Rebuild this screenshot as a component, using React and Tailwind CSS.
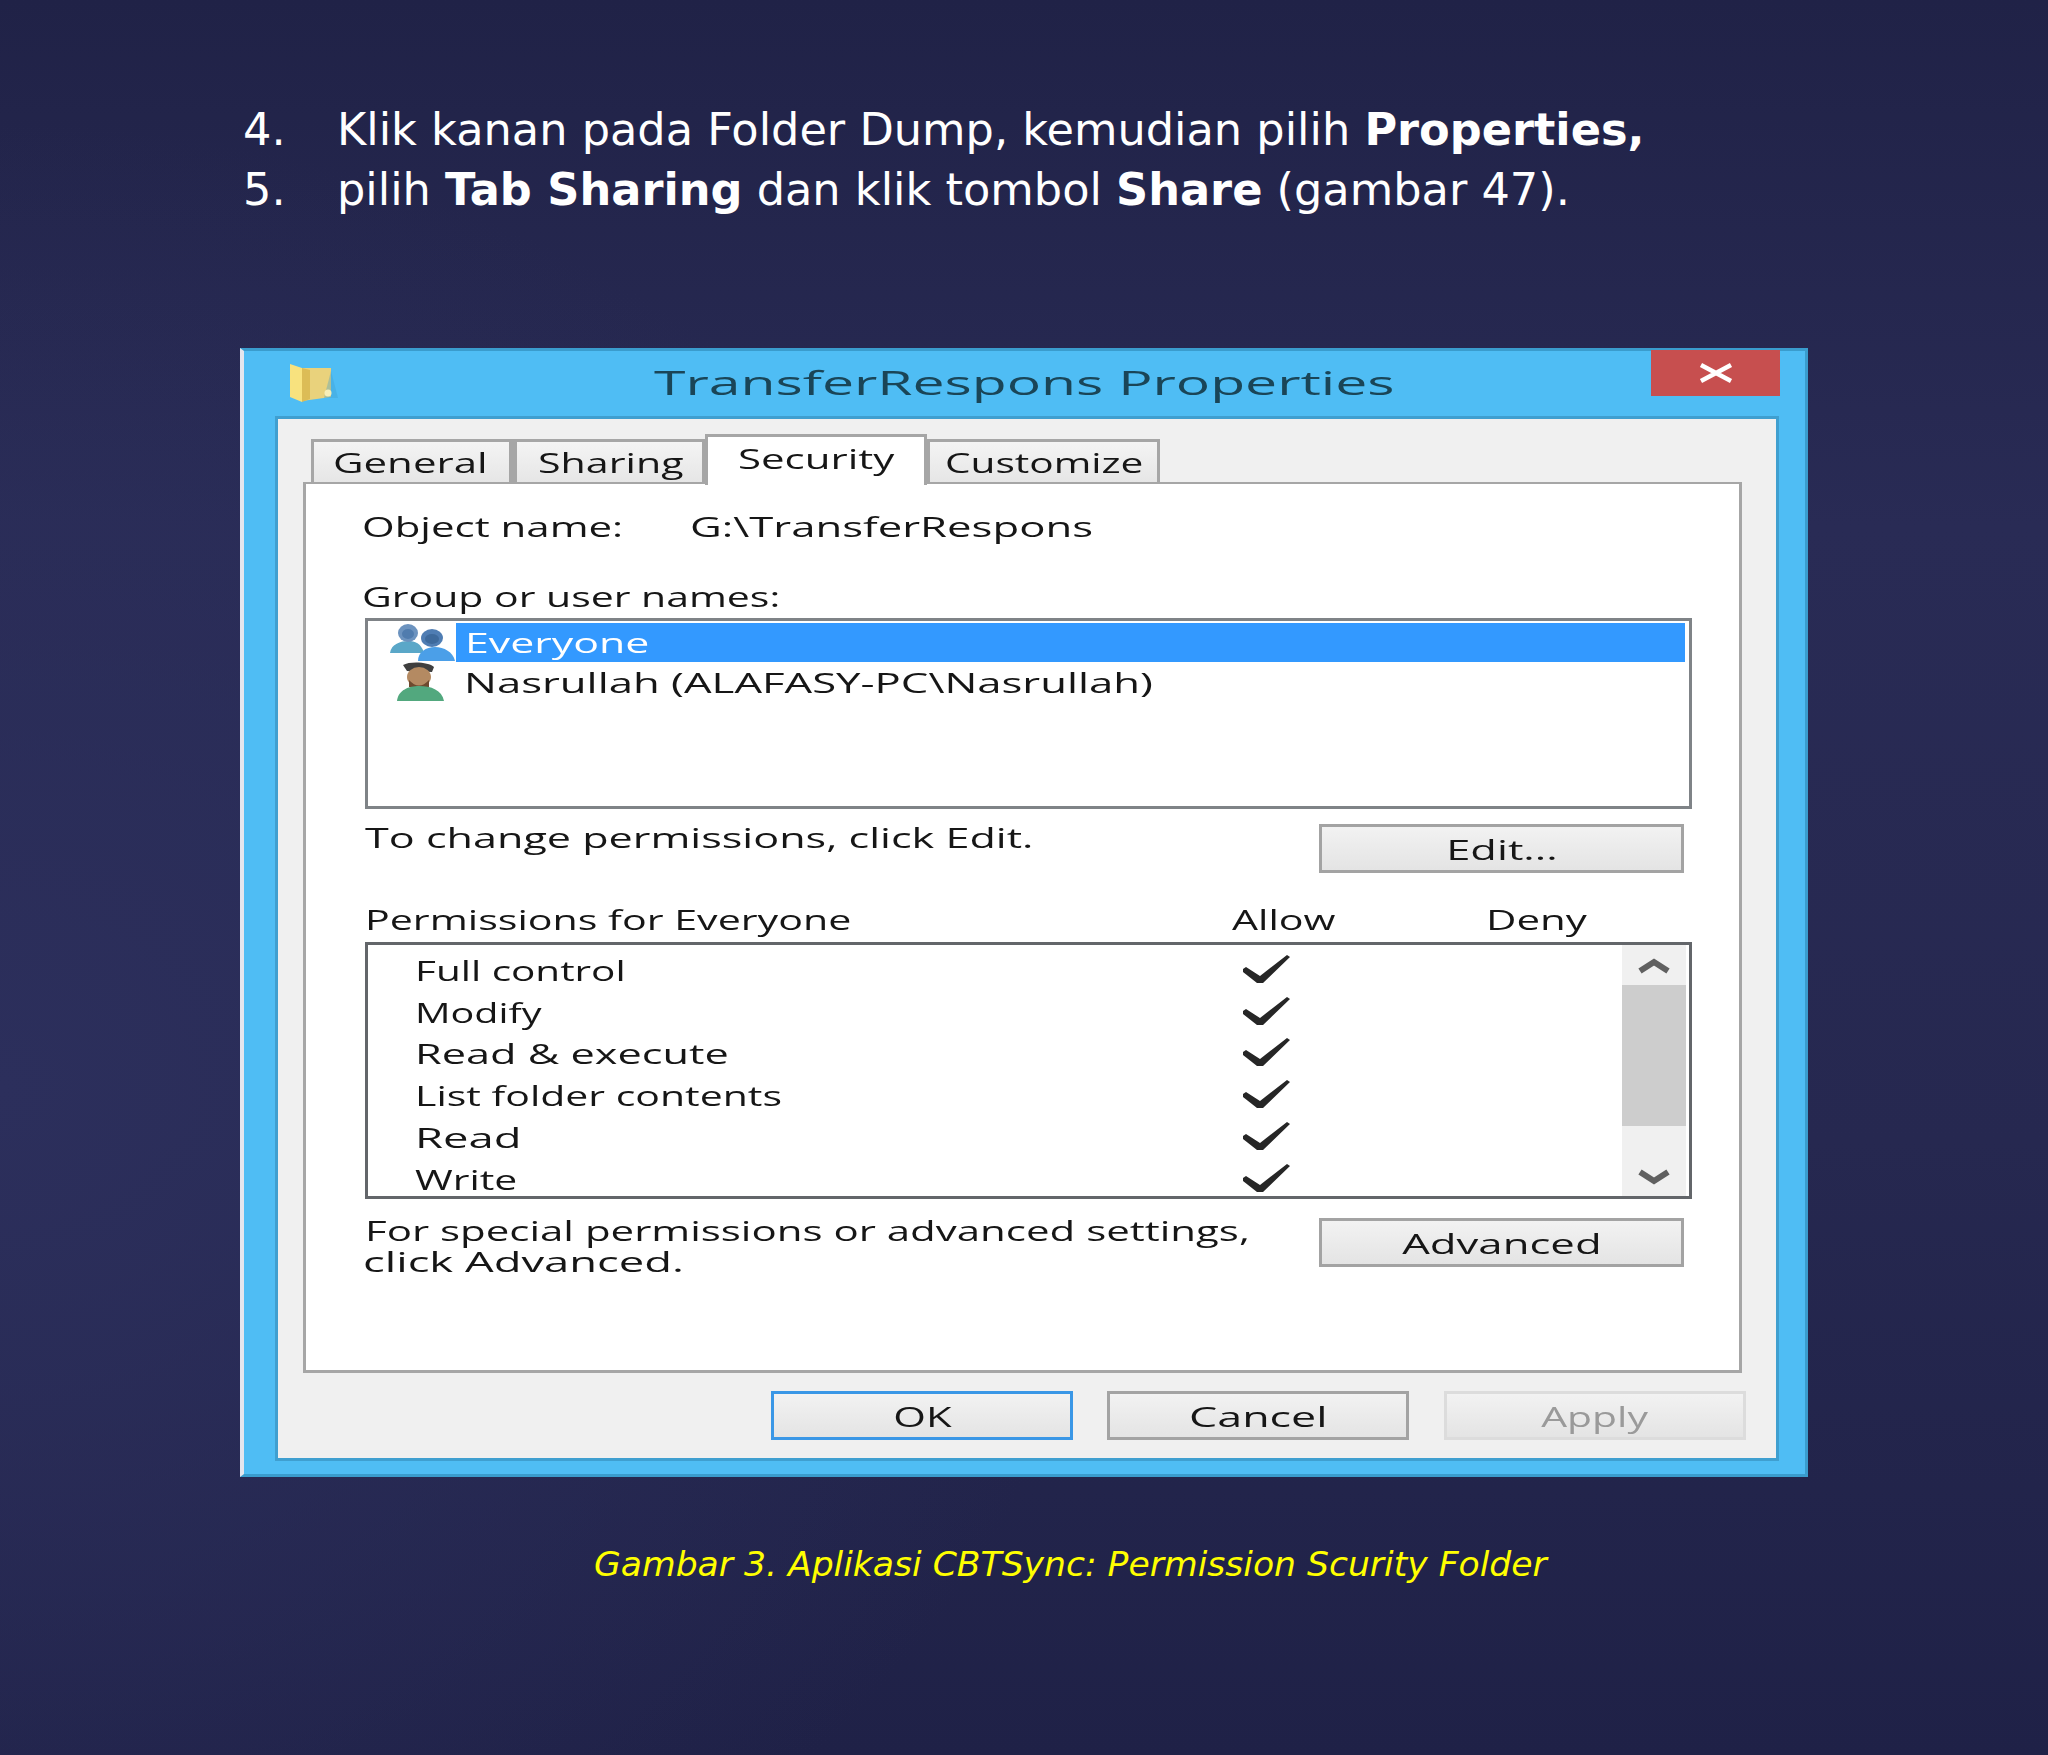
const FONT = "font-['Open_Sans','Liberation_Sans',sans-serif]";

function Stretch({ children, sx = "scale-x-[1.5]" }) {
  return <span className={`inline-block whitespace-nowrap origin-left ${sx}`}>{children}</span>;
}

function Folder() {
  return (
    <svg width="52" height="42" viewBox="0 0 52 42">
      <path d="M14 6 L43 6 L43 35 L14 39 Z" fill="#e9d27c" />
      <path d="M43 9 L50 36 L36 36 Z" fill="#3d9fcf" opacity="0.35" />
      <path d="M2 2 L14 6 L14 40 L2 35 Z" fill="#f8e27e" />
      <path d="M14 6 L22 8 L22 37 L14 40 Z" fill="#dcbc56" />
      <circle cx="40" cy="31" r="3.5" fill="#f7eeb8" />
    </svg>
  );
}

function GroupIcon() {
  return (
    <svg width="68" height="40" viewBox="0 0 68 40">
      <path d="M2 30 C3 21 13 18 20 18 C27 18 33 20 36 30 Z" fill="#5aa7c8" />
      <ellipse cx="20" cy="10" rx="10" ry="9" fill="#6c93bf" />
      <ellipse cx="20" cy="11" rx="6" ry="5" fill="#507cae" />
      <path d="M30 38 C30 29 38 24 47 24 C56 24 65 29 67 38 Z" fill="#4b9fe8" />
      <ellipse cx="44" cy="15" rx="11" ry="9" fill="#4f7db3" />
      <ellipse cx="44" cy="16" rx="7" ry="5" fill="#3e6a9c" />
    </svg>
  );
}

function UserIcon() {
  return (
    <svg width="52" height="40" viewBox="0 0 52 40">
      <path d="M7 3 C14 -1 33 0 38 5 L36 10 L11 9 Z" fill="#3f3f3f" />
      <ellipse cx="23" cy="15" rx="12" ry="10" fill="#b48a62" />
      <path d="M13 18 Q23 29 33 18 L33 25 L13 25 Z" fill="#6e4a2e" />
      <path d="M1 39 C2 28 13 24 23 24 C35 24 46 28 48 39 Z" fill="#52a87e" />
    </svg>
  );
}

function Check() {
  return (
    <svg width="50" height="30" viewBox="0 0 50 30" className="shrink-0">
      <path d="M0 14 L3 12 L17 21 L44 0 L47 2 L20 28 L14 28 L0 17 Z" fill="#262626" />
    </svg>
  );
}

function Chevron({ up }) {
  return (
    <svg width="32" height="18" viewBox="0 0 32 18">
      <path d={up ? "M2 15 L16 6 L30 15" : "M2 3 L16 12 L30 3"} fill="none" stroke="#606060" strokeWidth="6" />
    </svg>
  );
}

function Tab({ label, w, pad, sx, active, border = "" }) {
  if (active) {
    return (
      <div className={`${w} ${pad} h-[51px] -mb-[3px] bg-white border-[3px] border-b-0 border-[#a6a6a6] relative pt-[3px] text-[28px] leading-[36px]`}>
        <Stretch sx={sx}>{label}</Stretch>
      </div>
    );
  }
  return (
    <div className={`${w} ${pad} ${border} h-[43px] bg-gradient-to-b from-[#f4f4f4] to-[#e6e6e6] border-[3px] border-b-0 border-[#a6a6a6] pt-[2px] text-[28px] leading-[36px]`}>
      <Stretch sx={sx}>{label}</Stretch>
    </div>
  );
}

function Button({ label, sx, className = "", text = "text-[#161616]" }) {
  return (
    <div className={`h-[49px] border-[3px] bg-gradient-to-b from-[#f2f2f2] to-[#e4e4e4] flex items-center justify-center text-[28px] leading-[36px] ${text} ${className}`}>
      <span className={`inline-block whitespace-nowrap ${sx}`}>{label}</span>
    </div>
  );
}

function PermRow({ label, sx }) {
  return (
    <div className="h-[41.75px] shrink-0 flex items-center pl-[47px] text-[28px] leading-[36px]">
      <div className="w-[828px] shrink-0">
        <Stretch sx={sx}>{label}</Stretch>
      </div>
      <Check />
    </div>
  );
}

export default function App() {
  const perms = [
    ["Full control", "scale-x-[1.445]"],
    ["Modify", "scale-x-[1.41]"],
    ["Read & execute", "scale-x-[1.545]"],
    ["List folder contents", "scale-x-[1.463]"],
    ["Read", "scale-x-[1.62]"],
    ["Write", "scale-x-[1.46]"],
  ];
  return (
    <div className="w-[2048px] h-[1755px] overflow-hidden bg-[radial-gradient(ellipse_55%_55%_at_0%_62%,#2c2f5c_0%,transparent_100%),linear-gradient(180deg,#202247_0%,#292b55_30%,#262850_65%,#1f2147_100%)] pl-[240px]">
      <div className="pt-[100px] h-[348px] font-['DejaVu_Sans',sans-serif] text-[44.65px] leading-[60px] text-white">
        <div className="flex"><span className="w-[97px] pl-[3px]">4.</span><span>Klik kanan pada Folder Dump, kemudian pilih <b>Properties,</b></span></div>
        <div className="flex"><span className="w-[97px] pl-[3px]">5.</span><span>pilih <b>Tab Sharing</b> dan klik tombol <b>Share</b> (gambar 47).</span></div>
      </div>

      <div className={`w-[1568px] h-[1129px] bg-[#4fbdf4] border-[3px] border-[#3a9ccd] border-l-[4px] border-l-[#e4e6ee] flex flex-col blur-[0.5px] font-medium text-[#161616] ${FONT}`}>
        <div className="h-[65px] shrink-0 flex relative">
          <div className="ml-[44px] mt-[11px]"><Folder /></div>
          <div className="ml-[314px] mt-[10px] text-[33px] leading-[44px] text-[#1a4557]">
            <Stretch sx="scale-x-[1.73]">TransferRespons Properties</Stretch>
          </div>
          <div className="absolute right-[25px] -top-[1px] w-[129px] h-[46px] bg-[#c74f4f] flex items-center justify-center">
            <svg width="34" height="20" viewBox="0 0 34 20"><path d="M2 2 L32 18 M32 2 L2 18" stroke="#fff" strokeWidth="4.5" /></svg>
          </div>
        </div>

        <div className="ml-[31px] mr-[26px] h-[1045px] bg-[#f0f0f0] border-[3px] border-[#3f9fd0] flex flex-col">
          <div className="pl-[33px] flex items-end h-[63px] shrink-0">
            <Tab label="General" w="w-[206px]" pad="pl-[19px]" border="border-r-[8px]" />
            <Tab label="Sharing" w="w-[188px]" pad="pl-[21px]" sx="scale-x-[1.47]" border="border-l-0" />
            <div className="z-10"><Tab label="Security" w="w-[222px]" pad="pl-[30px]" active /></div>
            <Tab label="Customize" w="w-[233px]" pad="pl-[15px]" sx="scale-x-[1.45]" />
          </div>

          <div className="ml-[25px] mr-[34px] h-[891px] bg-white border-[3px] border-t-[2px] border-[#a6a6a6] pl-[57px] pr-[47px] flex flex-col text-[28px] leading-[30px]">
            <div className="mt-[27px] -ml-[1px] h-[30px] flex">
              <div className="w-[328px]"><Stretch>Object name:</Stretch></div>
              <Stretch sx="scale-x-[1.56]">G:\TransferRespons</Stretch>
            </div>
            <div className="mt-[40px] -ml-[1px] h-[30px]"><Stretch sx="scale-x-[1.463]">Group or user names:</Stretch></div>
            <div className="mt-[7px] ml-[2px] h-[191px] border-[3px] border-[#7f8387] pt-[2px] pr-[4px]">
              <div className="flex h-[39px]">
                <div className="w-[20px]" />
                <GroupIcon />
                <div className="flex-1 bg-[#3399ff] text-white pl-[9px] leading-[38px]"><Stretch sx="scale-x-[1.53]">Everyone</Stretch></div>
              </div>
              <div className="flex h-[40px] items-center">
                <div className="w-[28px]" />
                <UserIcon />
                <div className="pl-[16px]"><Stretch sx="scale-x-[1.56]">Nasrullah (ALAFASY-PC\Nasrullah)</Stretch></div>
              </div>
            </div>

            <div className="mt-[15px] h-[49px] flex justify-between pr-[8px] pl-[2px]">
              <div className="-mt-[2px]"><Stretch sx="scale-x-[1.54]">To change permissions, click Edit.</Stretch></div>
              <Button label="Edit..." sx="scale-x-[1.55]" className="w-[365px] border-[#a3a3a3]" />
            </div>

            <div className="mt-[31px] ml-[2px] h-[30px] flex">
              <div className="w-[867px]"><Stretch sx="scale-x-[1.47]">Permissions for Everyone</Stretch></div>
              <div className="w-[254px]"><Stretch sx="scale-x-[1.47]">Allow</Stretch></div>
              <Stretch>Deny</Stretch>
            </div>

            <div className="mt-[8px] ml-[2px] h-[257px] border-[3px] border-[#63666a] flex overflow-hidden">
              <div className="flex-1 min-w-0 pt-[4px] flex flex-col overflow-hidden">
                {perms.map(([p, sx]) => <PermRow key={p} label={p} sx={sx} />)}
              </div>
              <div className="w-[64px] mr-[3px] shrink-0 bg-[#f0f0f0] flex flex-col">
                <div className="h-[40px] flex items-center justify-center"><Chevron up /></div>
                <div className="h-[141px] bg-[#cdcdcd]" />
                <div className="flex-1 flex items-end justify-center pb-[9px]"><Chevron /></div>
              </div>
            </div>

            <div className="mt-[19px] flex justify-between pr-[8px] pl-[2px]">
              <div className="-mt-[3px] leading-[31px]">
                <div><Stretch>For special permissions or advanced settings,</Stretch></div>
                <div className="-ml-[2px]"><Stretch sx="scale-x-[1.62]">click Advanced.</Stretch></div>
              </div>
              <Button label="Advanced" sx="scale-x-[1.56]" className="w-[365px] border-[#a3a3a3]" />
            </div>
          </div>

          <div className="mt-[18px] pr-[30px] flex justify-end gap-[34px]">
            <Button label="OK" sx="scale-x-[1.5]" className="w-[302px] border-[#3a97e6]" />
            <Button label="Cancel" sx="scale-x-[1.6]" className="w-[302px] border-[#a3a3a3]" />
            <Button label="Apply" sx="scale-x-[1.46]" className="w-[302px] ml-[1px] border-[#dcdcdc]" text="text-[#9a9a9a]" />
          </div>
        </div>
      </div>

      <div className="mt-[64px] pl-[354px] font-['DejaVu_Sans',sans-serif] italic text-[34.6px] leading-[46px] text-[#ffff00] whitespace-nowrap">
        Gambar 3. Aplikasi CBTSync: Permission Scurity Folder
      </div>
    </div>
  );
}
